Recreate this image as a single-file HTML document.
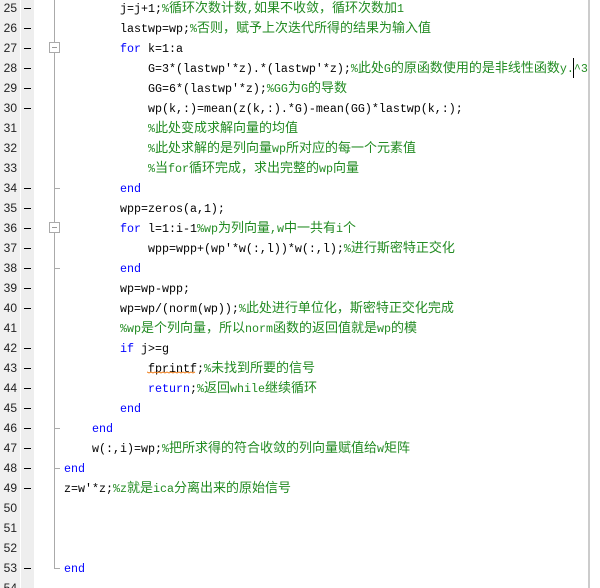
<!DOCTYPE html>
<html><head><meta charset="utf-8"><style>
html,body{margin:0;padding:0;background:#fff}
#p{position:relative;width:600px;height:588px;overflow:hidden;background:#fff}
.a{position:absolute}
.n{position:absolute;left:0;width:17px;text-align:right;font:12px/20px "Liberation Sans",sans-serif;color:#222}
.d{position:absolute;left:24px;width:7px;height:1px;background:#000}
pre{position:absolute;margin:1px 0 0;font:11.67px/20px "Liberation Mono",monospace;color:#000;white-space:pre}
pre.i0{left:64px}pre.i1{left:92px}pre.i2{left:120px}pre.i3{left:148px}
s{text-decoration:none;color:#00f}
em{font-style:normal;color:#228b22}
u{text-decoration:none;font-family:"WenQuanYi Zen Hei","Noto Sans CJK SC",sans-serif;font-size:13px;line-height:0}
.t{position:absolute;left:55px;width:5px;height:1px;background:#aaa}
.b{position:absolute;left:49px;width:9px;height:9px;border:1px solid #aaa;background:#fff}
.b:after{content:"";position:absolute;left:2px;top:4px;width:5px;height:1px;background:#999}
</style></head><body><div id="p">
<div class="a" style="left:0;top:0;width:20px;height:588px;background:#f0f0f0"></div>
<div class="a" style="left:21px;top:0;width:13px;height:588px;background:#eee"></div>
<div class="a" style="left:54px;top:0;width:1px;height:569px;background:#aaa"></div>
<div class="a" style="left:588px;top:0;width:2px;height:588px;background:#ccc"></div>
<div class="b" style="top:42px"></div><div class="b" style="top:222px"></div>
<div class="t" style="top:188px"></div><div class="t" style="top:268px"></div><div class="t" style="top:428px"></div><div class="t" style="top:468px"></div><div class="t" style="top:568px"></div>

<div class="n" style="top:-2px">25</div><div class="d" style="top:8px"></div>
<div class="n" style="top:18px">26</div><div class="d" style="top:28px"></div>
<div class="n" style="top:38px">27</div><div class="d" style="top:48px"></div>
<div class="n" style="top:58px">28</div><div class="d" style="top:68px"></div>
<div class="n" style="top:78px">29</div><div class="d" style="top:88px"></div>
<div class="n" style="top:98px">30</div><div class="d" style="top:108px"></div>
<div class="n" style="top:118px">31</div>
<div class="n" style="top:138px">32</div>
<div class="n" style="top:158px">33</div>
<div class="n" style="top:178px">34</div><div class="d" style="top:188px"></div>
<div class="n" style="top:198px">35</div><div class="d" style="top:208px"></div>
<div class="n" style="top:218px">36</div><div class="d" style="top:228px"></div>
<div class="n" style="top:238px">37</div><div class="d" style="top:248px"></div>
<div class="n" style="top:258px">38</div><div class="d" style="top:268px"></div>
<div class="n" style="top:278px">39</div><div class="d" style="top:288px"></div>
<div class="n" style="top:298px">40</div><div class="d" style="top:308px"></div>
<div class="n" style="top:318px">41</div>
<div class="n" style="top:338px">42</div><div class="d" style="top:348px"></div>
<div class="n" style="top:358px">43</div><div class="d" style="top:368px"></div>
<div class="n" style="top:378px">44</div><div class="d" style="top:388px"></div>
<div class="n" style="top:398px">45</div><div class="d" style="top:408px"></div>
<div class="n" style="top:418px">46</div><div class="d" style="top:428px"></div>
<div class="n" style="top:438px">47</div><div class="d" style="top:448px"></div>
<div class="n" style="top:458px">48</div><div class="d" style="top:468px"></div>
<div class="n" style="top:478px">49</div><div class="d" style="top:488px"></div>
<div class="n" style="top:498px">50</div>
<div class="n" style="top:518px">51</div>
<div class="n" style="top:538px">52</div>
<div class="n" style="top:558px">53</div><div class="d" style="top:568px"></div>
<div class="n" style="top:578px">54</div>

<pre class="i2" style="top:-2px">j=j+1;<em>%<u>循环次数计数</u>,<u>如果不收敛，循环次数加</u>1</em></pre>
<pre class="i2" style="top:18px">lastwp=wp;<em>%<u>否则，赋予上次迭代所得的结果为输入值</u></em></pre>
<pre class="i2" style="top:38px"><s>for</s> k=1:a</pre>
<pre class="i3" style="top:58px">G=3*(lastwp'*z).*(lastwp'*z);<em>%<u>此处</u>G<u>的原函数使用的是非线性函数</u>y.^3</em></pre>
<pre class="i3" style="top:78px">GG=6*(lastwp'*z);<em>%GG<u>为</u>G<u>的导数</u></em></pre>
<pre class="i3" style="top:98px">wp(k,:)=mean(z(k,:).*G)-mean(GG)*lastwp(k,:);</pre>
<pre class="i3" style="top:118px"><em>%<u>此处变成求解向量的均值</u></em></pre>
<pre class="i3" style="top:138px"><em>%<u>此处求解的是列向量</u>wp<u>所对应的每一个元素值</u></em></pre>
<pre class="i3" style="top:158px"><em>%<u>当</u>for<u>循环完成，求出完整的</u>wp<u>向量</u></em></pre>
<pre class="i2" style="top:178px"><s>end</s></pre>
<pre class="i2" style="top:198px">wpp=zeros(a,1);</pre>
<pre class="i2" style="top:218px"><s>for</s> l=1:i-1<em>%wp<u>为列向量</u>,w<u>中一共有</u>i<u>个</u></em></pre>
<pre class="i3" style="top:238px">wpp=wpp+(wp'*w(:,l))*w(:,l);<em>%<u>进行斯密特正交化</u></em></pre>
<pre class="i2" style="top:258px"><s>end</s></pre>
<pre class="i2" style="top:278px">wp=wp-wpp;</pre>
<pre class="i2" style="top:298px">wp=wp/(norm(wp));<em>%<u>此处进行单位化，斯密特正交化完成</u></em></pre>
<pre class="i2" style="top:318px"><em>%wp<u>是个列向量，所以</u>norm<u>函数的返回值就是</u>wp<u>的模</u></em></pre>
<pre class="i2" style="top:338px"><s>if</s> j&gt;=g</pre>
<pre class="i3" style="top:358px">fprintf;<em>%<u>未找到所要的信号</u></em></pre>
<pre class="i3" style="top:378px"><s>return</s>;<em>%<u>返回</u>while<u>继续循环</u></em></pre>
<pre class="i2" style="top:398px"><s>end</s></pre>
<pre class="i1" style="top:418px"><s>end</s></pre>
<pre class="i1" style="top:438px">w(:,i)=wp;<em>%<u>把所求得的符合收敛的列向量赋值给</u>w<u>矩阵</u></em></pre>
<pre class="i0" style="top:458px"><s>end</s></pre>
<pre class="i0" style="top:478px">z=w'*z;<em>%z<u>就是</u>ica<u>分离出来的原始信号</u></em></pre>
<pre class="i0" style="top:558px"><s>end</s></pre>

<svg class="a" style="left:147px;top:371px" width="49" height="3"><path d="M0 1 L2 2 L4 1 L6 2 L8 1 L10 2 L12 1 L14 2 L16 1 L18 2 L20 1 L22 2 L24 1 L26 2 L28 1 L30 2 L32 1 L34 2 L36 1 L38 2 L40 1 L42 2 L44 1 L46 2 L48 1" fill="none" stroke="#f08020" stroke-width="1"/></svg>
<div class="a" style="left:573px;top:58px;width:1px;height:20px;background:#000"></div>
</div></body></html>
